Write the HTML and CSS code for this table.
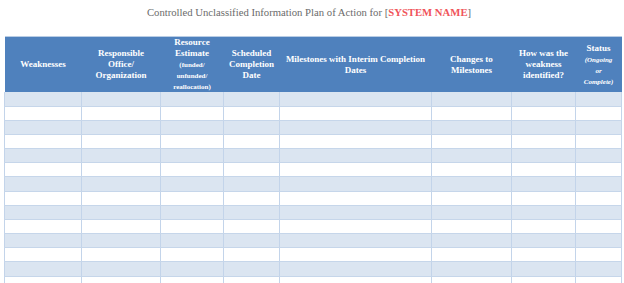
FILE: index.html
```html
<!DOCTYPE html>
<html>
<head>
<meta charset="utf-8">
<link rel="stylesheet" href="styles.css">
</head>
<body>
<div class="title">Controlled Unclassified Information Plan of Action for [<span class="sys">SYSTEM NAME</span>]</div>
<table class="poam">
<colgroup>
<col class="c1"><col class="c2"><col class="c3"><col class="c4"><col class="c5"><col class="c6"><col class="c7"><col class="c8">
</colgroup>
<thead>
<tr>
<th>Weaknesses</th>
<th>Responsible<br>Office/<br>Organization</th>
<th><span class="big">Resource<br>Estimate</span><br><span class="small">(funded/<br>unfunded/<br>reallocation)</span></th>
<th>Scheduled<br>Completion<br>Date</th>
<th>Milestones with Interim Completion<br>Dates</th>
<th>Changes to<br>Milestones</th>
<th>How was the<br>weakness<br>identified?</th>
<th><span class="big">Status</span><br><span class="small it">(Ongoing<br>or<br>Complete)</span></th>
</tr>
</thead>
<tbody>
<tr class="a"><td></td><td></td><td></td><td></td><td></td><td></td><td></td><td></td></tr>
<tr class="b"><td></td><td></td><td></td><td></td><td></td><td></td><td></td><td></td></tr>
<tr class="a"><td></td><td></td><td></td><td></td><td></td><td></td><td></td><td></td></tr>
<tr class="b"><td></td><td></td><td></td><td></td><td></td><td></td><td></td><td></td></tr>
<tr class="a"><td></td><td></td><td></td><td></td><td></td><td></td><td></td><td></td></tr>
<tr class="b"><td></td><td></td><td></td><td></td><td></td><td></td><td></td><td></td></tr>
<tr class="a"><td></td><td></td><td></td><td></td><td></td><td></td><td></td><td></td></tr>
<tr class="b"><td></td><td></td><td></td><td></td><td></td><td></td><td></td><td></td></tr>
<tr class="a"><td></td><td></td><td></td><td></td><td></td><td></td><td></td><td></td></tr>
<tr class="b"><td></td><td></td><td></td><td></td><td></td><td></td><td></td><td></td></tr>
<tr class="a"><td></td><td></td><td></td><td></td><td></td><td></td><td></td><td></td></tr>
<tr class="b"><td></td><td></td><td></td><td></td><td></td><td></td><td></td><td></td></tr>
<tr class="a"><td></td><td></td><td></td><td></td><td></td><td></td><td></td><td></td></tr>
<tr class="b"><td></td><td></td><td></td><td></td><td></td><td></td><td></td><td></td></tr>
<tr class="a"><td></td><td></td><td></td><td></td><td></td><td></td><td></td><td></td></tr>
</tbody>
</table>
</body>
</html>
```
FILE: styles.css
```css
html, body {
  margin: 0;
  padding: 0;
  overflow: hidden;
  background: #ffffff;
}
body {
  font-family: "Liberation Serif", "Times New Roman", serif;
}
.title {
  height: 36px;
  padding-top: 5px;
  padding-right: 6px;
  box-sizing: border-box;
  text-align: center;
  font-size: 10.7px;
  line-height: 14px;
  color: #6b6b6b;
}
.title .sys {
  color: #f0545a;
  font-weight: bold;
}
.poam {
  margin-left: 4px;
  width: 617px;
  border-collapse: collapse;
  table-layout: fixed;
}
.c1 { width: 77px; }
.c2 { width: 79px; }
.c3 { width: 63px; }
.c4 { width: 56px; }
.c5 { width: 152px; }
.c6 { width: 80px; }
.c7 { width: 64px; }
.c8 { width: 46px; }
.poam th {
  height: 50px;
  padding: 0;
  background: #4f81bd;
  color: #ffffff;
  font-weight: bold;
  font-size: 9px;
  line-height: 11px;
  text-align: center;
  vertical-align: middle;
  border-top: 1px solid #b9cde5;
}
.poam th .big {
  line-height: 10px;
}
.poam th .small {
  font-size: 7px;
  line-height: 8.5px;
}
.poam th .it {
  font-style: italic;
}
.poam td {
  height: 14.17px;
  padding: 0;
  box-sizing: border-box;
  border-left: 1px solid #c3d4ea;
  border-right: 1px solid #c3d4ea;
  border-bottom: 1px solid #c6d6ea;
}
.poam tr.a td {
  background: #dbe5f1;
}
.poam tr.b td {
  background: #ffffff;
}
```
